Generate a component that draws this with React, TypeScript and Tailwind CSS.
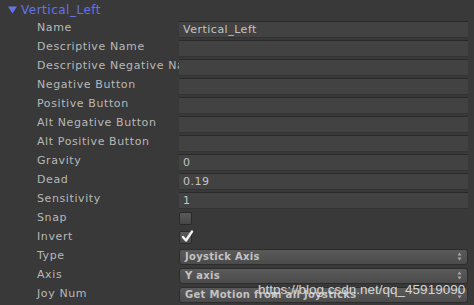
import React from "react";

const font = { fontFamily: '"DejaVu Sans", Verdana, sans-serif' };

function TextField({ value }: { value?: string }) {
  return (
    <div className="h-[16px] flex-1 border-t border-[#2a2a2a] bg-[#424242] pl-[4px] text-[11px] leading-[15px] tracking-[0.5px] text-[#c4c4c4] shadow-[0_1px_0_#333]">
      {value}
    </div>
  );
}

function Dropdown({ value }: { value: string }) {
  return (
    <div className="flex h-[16px] flex-1 items-center justify-between rounded-[3px] border border-[#2c2c2c] bg-gradient-to-b from-[#5a5a5a] to-[#4b4b4b] pl-[5px] pr-[5px] text-[10px] font-bold tracking-[0.3px] text-[#c2c2c2]">
      <span>{value}</span>
      <svg width="5" height="9" viewBox="0 0 5 9">
        <path d="M2.5 0.5 L4.5 3.5 L0.5 3.5 Z M2.5 8.5 L4.5 5.5 L0.5 5.5 Z" fill="#a8a8a8" />
      </svg>
    </div>
  );
}

function Checkbox({ checked }: { checked?: boolean }) {
  return (
    <div className="relative h-[13px] w-[13px] rounded-[2px] border border-[#2a2a2a] bg-gradient-to-b from-[#5a5a5a] to-[#474747]">
      {checked && (
        <svg className="absolute left-[1px] top-[-2px]" width="13" height="13" viewBox="0 0 13 13">
          <path d="M2 7 L5 10.5 L11 1.5" stroke="#f2f2f2" strokeWidth="2.4" fill="none" strokeLinecap="round" strokeLinejoin="round" />
        </svg>
      )}
    </div>
  );
}

type Row = { label: string; kind: "text" | "check" | "drop"; value?: string; checked?: boolean };

const rows: Row[] = [
  { label: "Name", kind: "text", value: "Vertical_Left" },
  { label: "Descriptive Name", kind: "text" },
  { label: "Descriptive Negative Name", kind: "text" },
  { label: "Negative Button", kind: "text" },
  { label: "Positive Button", kind: "text" },
  { label: "Alt Negative Button", kind: "text" },
  { label: "Alt Positive Button", kind: "text" },
  { label: "Gravity", kind: "text", value: "0" },
  { label: "Dead", kind: "text", value: "0.19" },
  { label: "Sensitivity", kind: "text", value: "1" },
  { label: "Snap", kind: "check" },
  { label: "Invert", kind: "check", checked: true },
  { label: "Type", kind: "drop", value: "Joystick Axis" },
  { label: "Axis", kind: "drop", value: "Y axis" },
  { label: "Joy Num", kind: "drop", value: "Get Motion from all Joysticks" },
];

export default function App() {
  return (
    <div className="relative h-[305px] w-[474px] overflow-hidden bg-[#393939]" style={font}>
      <div className="flex h-[19px] items-center pl-[8px] text-[12px] tracking-[0.5px] text-[#6673e6]">
        <svg width="9" height="8" viewBox="0 0 9 8" className="mr-[4px]">
          <path d="M0 0.5 L9 0.5 L4.5 7.5 Z" fill="#6673e6" />
        </svg>
        <span>Vertical_Left</span>
      </div>
      {rows.map((r) => (
        <div key={r.label} className="flex h-[19px] items-center pr-[6px]">
          <div className="w-[179px] shrink-0 overflow-hidden whitespace-nowrap pl-[37px] text-[11px] tracking-[0.6px] text-[#b8b8b8]">
            {r.label}
          </div>
          {r.kind === "text" && <TextField value={r.value} />}
          {r.kind === "check" && <Checkbox checked={r.checked} />}
          {r.kind === "drop" && <Dropdown value={r.value!} />}
        </div>
      ))}
      <div
        className="absolute left-[258px] top-[280px] text-[13.5px] text-[#e6e6e6]/90"
        style={{ fontFamily: '"Liberation Sans", Arial, sans-serif' }}
      >
        https://blog.csdn.net/qq_45919090
      </div>
    </div>
  );
}
